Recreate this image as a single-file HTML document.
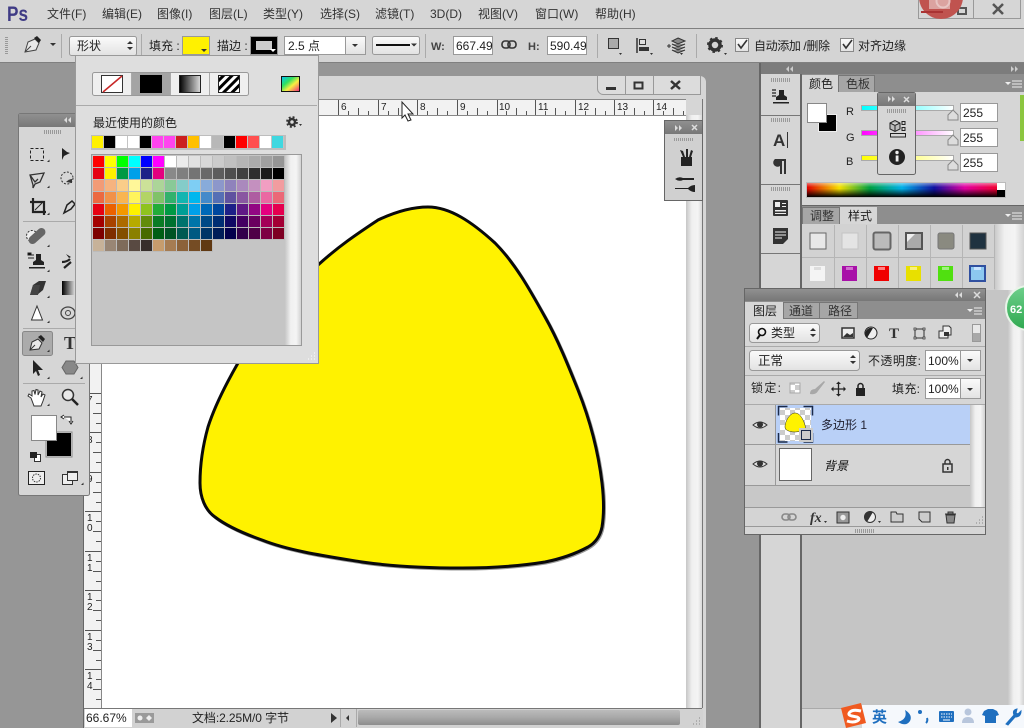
<!DOCTYPE html>
<html lang="zh"><head><meta charset="utf-8"><title>Photoshop</title>
<style>
html,body{margin:0;padding:0;width:1024px;height:728px;overflow:hidden;background:#969696}
svg{display:block;position:absolute;left:0;top:0}
text{font-family:"Liberation Sans","Noto Sans CJK SC",sans-serif;font-size:12px;fill:#222}
.m{fill:#333}
.tick{stroke:#555;stroke-width:1;fill:none}
.ln{stroke:#999;stroke-width:1;fill:none;shape-rendering:crispEdges}
#sw{position:absolute;left:93px;top:156px;width:192px;display:grid;grid-template-columns:repeat(16,12px);grid-auto-rows:12px}
#sw i{display:block;box-sizing:border-box;border:1px solid #bbb;border-width:0 1px 1px 0}
#rc{position:absolute;left:92px;top:136px;display:grid;grid-template-columns:repeat(16,12px);grid-auto-rows:12px}
#rc i{display:block;box-sizing:border-box;border-right:1px solid #c4c4c4}
</style></head><body>
<svg width="1024" height="728" viewBox="0 0 1024 728" xmlns="http://www.w3.org/2000/svg">
<defs>
<linearGradient id="btn" x1="0" y1="0" x2="0" y2="1"><stop offset="0" stop-color="#fbfbfb"/><stop offset="1" stop-color="#e2e2e2"/></linearGradient>
<linearGradient id="hd" x1="0" y1="0" x2="0" y2="1"><stop offset="0" stop-color="#909090"/><stop offset="1" stop-color="#777"/></linearGradient>
<linearGradient id="sc" x1="0" y1="0" x2="1" y2="0"><stop offset="0" stop-color="#c6c6c6"/><stop offset=".35" stop-color="#f0f0f0"/><stop offset=".7" stop-color="#f4f4f4"/><stop offset="1" stop-color="#d2d2d2"/></linearGradient>
<linearGradient id="th" x1="0" y1="0" x2="0" y2="1"><stop offset="0" stop-color="#bbb"/><stop offset=".5" stop-color="#a8a8a8"/><stop offset="1" stop-color="#8d8d8d"/></linearGradient>
<linearGradient id="gk" x1="0" y1="0" x2="1" y2="0"><stop offset="0" stop-color="#000"/><stop offset="1" stop-color="#ddd"/></linearGradient>
<linearGradient id="sr" x1="0" y1="0" x2="1" y2="0"><stop offset="0" stop-color="#00ffff"/><stop offset="1" stop-color="#ffffff"/></linearGradient>
<linearGradient id="sg" x1="0" y1="0" x2="1" y2="0"><stop offset="0" stop-color="#ff00ff"/><stop offset="1" stop-color="#ffffff"/></linearGradient>
<linearGradient id="sb" x1="0" y1="0" x2="1" y2="0"><stop offset="0" stop-color="#ffff00"/><stop offset="1" stop-color="#ffffff"/></linearGradient>
<linearGradient id="spec" x1="0" y1="0" x2="1" y2="0"><stop offset="0" stop-color="#e00000"/><stop offset=".17" stop-color="#f6e000"/><stop offset=".33" stop-color="#00a040"/><stop offset=".5" stop-color="#00b0e8"/><stop offset=".67" stop-color="#1010a0"/><stop offset=".83" stop-color="#e000a0"/><stop offset="1" stop-color="#f00030"/></linearGradient>
<linearGradient id="dk" x1="0" y1="0" x2="0" y2="1"><stop offset="0" stop-color="#fff" stop-opacity=".45"/><stop offset=".3" stop-color="#fff" stop-opacity="0"/><stop offset=".4" stop-color="#000" stop-opacity="0"/><stop offset="1" stop-color="#000"/></linearGradient>
<linearGradient id="grn" x1="0" y1="0" x2="0" y2="1"><stop offset="0" stop-color="#6fd08c"/><stop offset="1" stop-color="#2ea84f"/></linearGradient>
<linearGradient id="rain" x1="0" y1="0" x2="1" y2="1"><stop offset="0" stop-color="#00c0ff"/><stop offset=".35" stop-color="#30e060"/><stop offset=".6" stop-color="#f8f040"/><stop offset="1" stop-color="#f02080"/></linearGradient>
<pattern id="ck" width="10" height="10" patternUnits="userSpaceOnUse"><rect width="10" height="10" fill="#fff"/><rect width="5" height="5" fill="#ccc"/><rect x="5" y="5" width="5" height="5" fill="#ccc"/></pattern>
<pattern id="hat" width="6" height="6" patternUnits="userSpaceOnUse" patternTransform="rotate(-45)"><rect width="6" height="6" fill="#fff"/><rect width="6" height="3" fill="#000"/></pattern>
</defs>

<!-- menu bar -->
<rect width="1024" height="28" fill="#d6d6d6"/>
<text x="7" y="21" textLength="21" lengthAdjust="spacingAndGlyphs" style="font-size:21px;font-weight:bold;fill:#3f3b85">Ps</text>
<text class="m" x="47" y="18">文件(F)</text><text class="m" x="102" y="18">编辑(E)</text><text class="m" x="157" y="18">图像(I)</text><text class="m" x="209" y="18">图层(L)</text><text class="m" x="263" y="18">类型(Y)</text><text class="m" x="320" y="18">选择(S)</text><text class="m" x="375" y="18">滤镜(T)</text><text class="m" x="430" y="18">3D(D)</text><text class="m" x="478" y="18">视图(V)</text><text class="m" x="535" y="18">窗口(W)</text><text class="m" x="595" y="18">帮助(H)</text>
<path d="M918.500 0V18.500H1020.500V0M973.500 0V18" fill="none" stroke="#999"/>
<rect x="958" y="8" width="8" height="6" fill="none" stroke="#555" stroke-width="2"/>
<path d="M993 4l10 10M1003 4l-10 10" stroke="#555" stroke-width="2.500"/>
<circle cx="941" cy="-3" r="22" fill="#c0534f"/>
<path d="M929 0V9H950V0" fill="#dba3a0"/><circle cx="943" cy="1" r="6.500" fill="none" stroke="#e8c5c3" stroke-width="2"/>
<rect x="921" y="11" width="22" height="2" fill="#a33"/>

<!-- options bar -->
<rect y="28" width="1024" height="35" fill="#d4d4d4"/>
<path d="M0 28.500H1024M0 62.500H1024" stroke="#808080"/>
<path class="ln" d="M5 37.500h3M5 39.500h3M5 41.500h3M5 43.500h3M5 45.500h3M5 47.500h3M5 49.500h3M5 51.500h3M5 53.500h3"/>
<path d="M25 52l3-10 7-3 4 4-3 7z" fill="#e8e8e8" stroke="#444"/><path d="M34 38l3-2 4 4-2 3z" fill="#222"/><path d="M25 52l6-6" stroke="#444"/>
<path d="M50 43h6l-3 3z" fill="#333"/>
<path d="M61.500 34V58M141.500 34V58M425.500 34V58M597.500 34V58M696.500 34V58" stroke="#aaa"/>
<rect x="69.500" y="36.500" width="67" height="19" rx="2" fill="url(#btn)" stroke="#999"/>
<text x="77" y="50">形状</text><path d="M127 44l3-3 3 3zM127 47l3 3 3-3z" fill="#333"/>
<text x="149" y="50">填充 :</text>
<rect x="182.500" y="36.500" width="27" height="18" fill="#fff100" stroke="#999"/><path d="M201 49h6l-3 3z" fill="#333"/>
<text x="217" y="50">描边 :</text>
<rect x="250.500" y="36.500" width="27" height="18" fill="#000" stroke="#999"/><rect x="256" y="41" width="16" height="9" fill="#ccc"/><path d="M270 49h6l-3 3z" fill="#fff"/>
<rect x="284.500" y="36.500" width="61" height="18" fill="#fff" stroke="#999"/><text x="288" y="50">2.5 点</text>
<rect x="345.500" y="36.500" width="20" height="18" fill="url(#btn)" stroke="#999"/><path d="M352 44h6l-3 3z" fill="#333"/>
<rect x="372.500" y="36.500" width="47" height="18" rx="2" fill="url(#btn)" stroke="#999"/><path d="M376 45h34" stroke="#111" stroke-width="2"/><path d="M411 43.500h6l-3 3z" fill="#333"/>
<text x="431" y="50" style="fill:#444;font-weight:bold;font-size:11px">W:</text>
<rect x="453.500" y="36.500" width="39" height="18" fill="#fff" stroke="#999"/><text x="456" y="50">667.49</text>
<rect x="502" y="41" width="8" height="7" rx="3" fill="none" stroke="#333" stroke-width="1.600"/><rect x="508" y="41" width="8" height="7" rx="3" fill="none" stroke="#333" stroke-width="1.600"/>
<text x="528" y="50" style="fill:#444;font-weight:bold;font-size:11px">H:</text>
<rect x="547.500" y="36.500" width="39" height="18" fill="#fff" stroke="#999"/><text x="550" y="50">590.49</text>
<rect x="608.500" y="38.500" width="10" height="10" fill="#aaa" stroke="#333"/><path d="M619 53h3l-1.500 2z" fill="#333"/>
<path d="M637 38V53" stroke="#333" stroke-width="1.500"/><rect x="639.500" y="39.500" width="6" height="5" fill="#ddd" stroke="#333"/><rect x="639" y="47" width="10" height="4" fill="#333"/><path d="M650 53h3l-1.500 2z" fill="#333"/>
<path d="M667 46h4M669 44v4" stroke="#333"/><path d="M678 38l7 3-7 3-6-3zM672 44l6 3 7-3M672 47l6 3 7-3M672 50l6 3 7-3" fill="#888" stroke="#333"/><path d="M680 53h3l-1.500 2z" fill="#333"/>
<circle cx="715" cy="45" r="5" fill="none" stroke="#333" stroke-width="3.500"/><circle cx="715" cy="45" r="7" fill="none" stroke="#333" stroke-width="2" stroke-dasharray="2.500 3"/><path d="M724 53h3l-1.500 2z" fill="#333"/>
<rect x="735.500" y="38.500" width="13" height="13" fill="url(#btn)" stroke="#888"/><path d="M738 44l3 4 6-8" fill="none" stroke="#333" stroke-width="1.600"/>
<text x="754" y="50" textLength="76">自动添加 /删除</text>
<rect x="840.500" y="38.500" width="13" height="13" fill="url(#btn)" stroke="#888"/><path d="M843 44l3 4 6-8" fill="none" stroke="#333" stroke-width="1.600"/>
<text x="858" y="50">对齐边缘</text>

<!-- document window -->
<path d="M84 728V76H700a6 6 0 0 1 6 6V728Z" fill="#d6d6d6"/>
<path d="M597.500 76V88a6 6 0 0 0 6 6.500H700.500V76M625.500 76V94M653.500 76V94" fill="#dcdcdc" stroke="#999"/>
<rect x="606" y="87" width="10" height="3" fill="#333"/>
<rect x="634.500" y="82.500" width="8" height="6" fill="none" stroke="#333" stroke-width="2"/>
<path d="M671 81l9 8M680 81l-9 8" stroke="#333" stroke-width="2.500"/>
<rect x="84" y="99" width="602" height="609" fill="#fff"/>
<rect x="84" y="99" width="602" height="16" fill="#f2f2f2"/>
<rect x="84" y="99" width="18" height="609" fill="#f2f2f2"/>
<path d="M84 99.500H686M102 115.500H686M101.500 115V708" stroke="#888"/>
<path class="tick" d="M338.500 100V115M378.500 100V115M417.500 100V115M457.500 100V115M497.500 100V115M535.500 100V115M575.500 100V115M614.500 100V115M653.500 100V115M348.500 111V115M358.500 108V115M368.500 111V115M388.500 111V115M398.500 108V115M408.500 111V115M427.500 111V115M437.500 108V115M447.500 111V115M467.500 111V115M477.500 108V115M487.500 111V115M506.500 111V115M516.500 108V115M526.500 111V115M545.500 111V115M555.500 108V115M565.500 111V115M585.500 111V115M595.500 108V115M605.500 111V115M624.500 111V115M634.500 108V115M644.500 111V115M663.500 111V115M673.500 108V115M683.500 111V115"/>
<g style="font-size:10px"><text x="341" y="110" style="font-size:10px">6</text><text x="381" y="110" style="font-size:10px">7</text><text x="420" y="110" style="font-size:10px">8</text><text x="460" y="110" style="font-size:10px">9</text><text x="499" y="110" style="font-size:10px">10</text><text x="538" y="110" style="font-size:10px">11</text><text x="578" y="110" style="font-size:10px">12</text><text x="617" y="110" style="font-size:10px">13</text><text x="656" y="110" style="font-size:10px">14</text></g>
<path class="tick" d="M85 393.500H101M85 432.500H101M85 472.500H101M85 511.500H101M85 551.500H101M85 590.500H101M85 630.500H101M85 669.500H101M96 403.500H101M93 413.500H101M96 423.500H101M96 442.500H101M93 452.500H101M96 462.500H101M96 482.500H101M93 492.500H101M96 502.500H101M96 521.500H101M93 531.500H101M96 541.500H101M96 561.500H101M93 571.500H101M96 581.500H101M96 600.500H101M93 610.500H101M96 620.500H101M96 640.500H101M93 650.500H101M96 660.500H101M96 679.500H101M93 689.500H101M96 699.500H101"/>
<text x="87" y="403" style="font-size:10px">7</text><text x="87" y="443" style="font-size:10px">8</text><text x="87" y="482" style="font-size:10px">9</text>
<text x="87" y="521" style="font-size:10px">1</text><text x="87" y="531" style="font-size:10px">0</text>
<text x="87" y="561" style="font-size:10px">1</text><text x="87" y="571" style="font-size:10px">1</text>
<text x="87" y="600" style="font-size:10px">1</text><text x="87" y="610" style="font-size:10px">2</text>
<text x="87" y="640" style="font-size:10px">1</text><text x="87" y="650" style="font-size:10px">3</text>
<text x="87" y="679" style="font-size:10px">1</text><text x="87" y="689" style="font-size:10px">4</text>
<!-- shape -->
<path d="M429 208C451 208 473 223 496 244C516 264 531 291 546 318C559 341 569 366 579 391C591 421 599 451 603 484C605 501 605 516 603 528C601 538 596 544 589 548C576 555 561 560 546 563C521 567 491 569 463 569C426 569 391 567 363 563C326 557 291 552 263 541C246 535 229 528 216 518C206 511 201 498 201 484" fill="none" stroke="#999" stroke-width="3"/>
<path d="M428 207C450 207 472 222 495 243C515 263 530 290 545 317C558 340 568 365 578 390C590 420 598 450 602 483C604 500 604 515 602 527C600 537 595 543 588 547C575 554 560 559 545 562C520 566 490 568 462 568C425 568 390 566 362 562C325 556 290 551 262 540C245 534 228 527 215 517C205 510 200 497 200 483C200 465 203 445 208 427C215 405 226 384 238 363C260 325 290 290 318 265C340 245 360 232 378 220C395 212 412 207 428 207Z" fill="#fff200" stroke="#0a0a0a" stroke-width="3"/>
<!-- scrollbars & status -->
<rect x="686" y="115" width="17" height="593" fill="url(#sc)"/>
<path d="M702.500 99V728" stroke="#777"/>
<rect x="84" y="708" width="619" height="20" fill="#d2d2d2"/>
<path d="M84 708.500H702" stroke="#777"/><path d="M83.500 76V728" stroke="#666"/>
<rect x="85" y="709" width="47" height="18" fill="#fff"/><text x="86" y="722">66.67%</text>
<rect x="135" y="713" width="19" height="10" fill="#9a9a9a"/><circle cx="140" cy="718" r="2.500" fill="#eee"/><path d="M146 718l3-3 3 3-3 3z" fill="#eee"/>
<text x="192" y="722" textLength="97">文档:2.25M/0 字节</text>
<path d="M331 713l6 5-6 5z" fill="#333"/><path d="M340.500 709V727M356.500 709V727" stroke="#aaa"/>
<path d="M349 715v6l-3-3z" fill="#333"/>
<rect x="358" y="710" width="322" height="15" rx="2" fill="url(#th)"/>
<path d="M699 724h1M696 724h1M693 724h1M699 721h1M696 721h1M699 718h1" stroke="#888"/>

<!-- mini float brushes -->
<rect x="664.500" y="120.500" width="38" height="80" fill="#d0d0d0" stroke="#666"/>
<rect x="665" y="121" width="37" height="13" fill="url(#hd)"/>
<path d="M675 125l3 3-3 3zM679 125l3 3-3 3z" fill="#ddd"/><path d="M692 125l5 5M697 125l-5 5" stroke="#ddd" stroke-width="1.500"/>
<path class="ln" d="M674.500 138v3M676.500 138v3M678.500 138v3M680.500 138v3M682.500 138v3M684.500 138v3M686.500 138v3M688.500 138v3M690.500 138v3M692.500 138v3"/>
<path d="M681 157h11v9h-11z" fill="#222"/><path d="M683 157l-3-7 3 1 2 6zM686 157v-8h2v8zM689 157l2-7 2 1-2 6z" fill="#222"/>
<path d="M675 179q4-3 8-1h11v2h-11q-4 2-8-1zM675 188h13q3-3 7-3v7q-4 0-7-3h-13z" fill="#222"/>

<!-- right dock -->
<rect x="706" y="63" width="54" height="665" fill="#969696"/>
<rect x="760" y="63" width="264" height="665" fill="#c5c5c5"/>
<rect x="761" y="63" width="263" height="11" fill="#7c7c7c"/>
<path d="M793 66l-3 3 3 3zM789 66l-3 3 3 3zM1011 66l3 3-3 3zM1015 66l3 3-3 3z" fill="#ccc"/>
<rect x="761" y="74" width="39" height="654" fill="#d6d6d6"/>
<path d="M759.500 63V728M760.500 63V728M800.500 74V728M801.500 74V728" stroke="#666"/>
<path d="M761 115.500H800M761 184.500H800M761 253.500H800" stroke="#777"/>
<path class="ln" d="M771.500 78v4M773.500 78v4M775.500 78v4M777.500 78v4M779.500 78v4M781.500 78v4M783.500 78v4M785.500 78v4M787.500 78v4M789.500 78v4M771.500 118v4M773.500 118v4M775.500 118v4M777.500 118v4M779.500 118v4M781.500 118v4M783.500 118v4M785.500 118v4M787.500 118v4M789.500 118v4M771.500 187v4M773.500 187v4M775.500 187v4M777.500 187v4M779.500 187v4M781.500 187v4M783.500 187v4M785.500 187v4M787.500 187v4M789.500 187v4"/>
<!-- dock icons -->
<path d="M772 90h4M772 93h4M772 96h4" stroke="#222" stroke-width="1.300"/><path d="M779 90h5v5l3 2v3h-11v-3l3-2z" fill="#222"/><rect x="773" y="102" width="16" height="1.500" fill="#222"/>
<text x="773" y="146" style="font-size:17px;font-weight:bold;fill:#333">A</text><path d="M787.500 132V148" stroke="#333"/>
<path d="M775 159h11v15h-2v-13h-2v13h-2v-8a4 4 0 0 1-5-7z" fill="#333"/>
<rect x="773" y="200" width="15" height="16" rx="1" fill="#333"/><path d="M775 202h5v5h-5zM775 210h11v1.500h-11zM775 213h11v1h-11zM782 203h4v1h-4zM782 206h4v1h-4z" fill="#eee"/>
<path d="M773 228h15v11l-5 5h-10z" fill="#333"/><path d="M775 232h11M775 235h11M775 238h7" stroke="#eee"/>

<!-- color panel -->
<rect x="802" y="74" width="222" height="18" fill="#8e8e8e"/>
<rect x="802" y="75" width="36" height="18" fill="#d6d6d6"/>
<rect x="838.500" y="75.500" width="36" height="17" fill="#a6a6a6" stroke="#777"/>
<text x="809" y="88">颜色</text><text x="846" y="88" style="fill:#333">色板</text>
<path d="M1005 82h6l-3 3z" fill="#eee"/><path d="M1012 81h10M1012 84h10M1012 87h10" stroke="#eee"/>
<rect x="802" y="92" width="222" height="113" fill="#d6d6d6"/>
<rect x="1020" y="95" width="4" height="46" fill="#8cc63f"/>
<rect x="818.500" y="114.500" width="18" height="17" fill="#000" stroke="#eee"/>
<rect x="807.500" y="103.500" width="19" height="19" fill="#fff" stroke="#888"/>
<text x="846" y="115" style="font-size:11px">R</text><text x="846" y="141" style="font-size:11px">G</text><text x="846" y="165" style="font-size:11px">B</text>
<rect x="861.500" y="105.500" width="92" height="5" fill="url(#sr)" stroke="#aaa"/>
<rect x="861.500" y="130.500" width="92" height="5" fill="url(#sg)" stroke="#aaa"/>
<rect x="861.500" y="155.500" width="92" height="5" fill="url(#sb)" stroke="#aaa"/>
<path d="M953 110l5 5v5h-10v-5zM953 135l5 5v5h-10v-5zM953 160l5 5v5h-10v-5z" fill="#ddd" stroke="#888"/>
<rect x="960.500" y="103.500" width="37" height="18" fill="#fff" stroke="#999"/><text x="963" y="117">255</text>
<rect x="960.500" y="128.500" width="37" height="18" fill="#fff" stroke="#999"/><text x="963" y="142">255</text>
<rect x="960.500" y="153.500" width="37" height="18" fill="#fff" stroke="#999"/><text x="963" y="167">255</text>
<rect x="806.500" y="182.500" width="199" height="15" fill="#eee" stroke="#bbb"/>
<rect x="807" y="183" width="190" height="14" fill="url(#spec)"/><rect x="807" y="183" width="190" height="14" fill="url(#dk)"/>
<rect x="997" y="183" width="8" height="7" fill="#fff"/><rect x="997" y="190" width="8" height="7" fill="#000"/>
<!-- float info -->
<rect x="877.500" y="92.500" width="38" height="82" rx="2" fill="#d6d6d6" stroke="#666"/>
<rect x="878" y="93" width="37" height="13" fill="url(#hd)"/>
<path d="M888 96l3 3-3 3zM892 96l3 3-3 3z" fill="#ddd"/><path d="M904 97l5 5M909 97l-5 5" stroke="#ddd" stroke-width="1.500"/>
<path class="ln" d="M887.500 109v4M889.500 109v4M891.500 109v4M893.500 109v4M895.500 109v4M897.500 109v4M899.500 109v4M901.500 109v4M903.500 109v4M905.500 109v4"/>
<path d="M890 123l5-2.500 5 2.500v6l-5 2.500-5-2.500zM890 123l5 2.500 5-2.500M895 125.500v6" fill="#bbb" stroke="#222"/>
<path d="M902 121.500h3v3h-3zM902 127.500h3v3h-3z" fill="none" stroke="#222"/><rect x="890.500" y="133.500" width="15" height="3.500" fill="none" stroke="#222"/>
<circle cx="897" cy="157" r="8" fill="#222"/><rect x="895.700" y="155.500" width="2.800" height="6" fill="#eee"/><circle cx="897" cy="152.500" r="1.700" fill="#eee"/>

<!-- styles panel -->
<rect x="802" y="205" width="222" height="19" fill="#8e8e8e"/>
<path d="M802 205.500H1024" stroke="#666"/>
<rect x="802.500" y="207.500" width="37" height="17" fill="#a6a6a6" stroke="#777"/>
<rect x="840" y="207" width="37" height="18" fill="#d6d6d6"/>
<text x="810" y="220" style="fill:#333">调整</text><text x="848" y="220">样式</text>
<path d="M1005 214h6l-3 3z" fill="#eee"/><path d="M1012 213h10M1012 216h10M1012 219h10" stroke="#eee"/>
<rect x="802" y="224" width="192" height="66" fill="#d2d2d2"/>
<rect x="994" y="224" width="30" height="66" fill="url(#sc)"/>
<path d="M834.500 225V289M866.500 225V289M898.500 225V289M930.500 225V289M962.500 225V289M994.500 225V289M802 257.500H994" stroke="#b5b5b5"/>
<rect x="810" y="233" width="16" height="16" fill="#e8e8e8" stroke="#666"/>
<rect x="842" y="233" width="16" height="16" fill="#e4e4e4" stroke="#c4c4c4"/>
<rect x="873.500" y="232.500" width="17" height="17" rx="2" fill="#bbb" stroke="#666" stroke-width="2"/>
<rect x="906" y="233" width="16" height="16" fill="#aaa" stroke="#555" stroke-width="2"/><path d="M907 234h8l-8 8z" fill="#eee"/>
<rect x="938" y="233" width="16" height="16" rx="2" fill="#8a8a80" stroke="#777"/>
<rect x="970" y="233" width="16" height="16" fill="#1f3240" stroke="#555"/>
<rect x="810" y="266" width="15" height="15" fill="#f4f4f4"/><rect x="842" y="266" width="15" height="15" fill="#a810a8"/><rect x="874" y="266" width="15" height="15" fill="#f00000"/><rect x="906" y="266" width="15" height="15" fill="#e8e000"/><rect x="938" y="266" width="15" height="15" fill="#50e010"/><rect x="970" y="266" width="15" height="15" fill="#8cc8f0" stroke="#3050a0" stroke-width="2"/>
<rect x="814" y="267" width="7" height="3" fill="#ddd"/><rect x="846" y="267" width="7" height="3" fill="#d070d0"/><rect x="878" y="267" width="7" height="3" fill="#ff8080"/><rect x="910" y="267" width="7" height="3" fill="#f8f080"/><rect x="942" y="267" width="7" height="3" fill="#a0f080"/><rect x="974" y="267" width="7" height="3" fill="#c8e4ff"/>
<!-- lower dock bg -->
<rect x="802" y="290" width="222" height="418" fill="#c5c5c5"/>
<rect x="1008" y="290" width="16" height="418" fill="url(#sc)"/>
<rect x="802" y="708" width="222" height="20" fill="#d6d6d6"/>
<path d="M802 708.500H1024" stroke="#aaa"/>
<!-- green badge -->
<circle cx="1028" cy="308" r="22" fill="url(#grn)" stroke="#e8f4e8" stroke-width="2"/>
<text x="1010" y="313" style="fill:#fff;font-weight:bold;font-size:11px">62</text>

<!-- layers panel -->
<rect x="744.500" y="288.500" width="241" height="246" fill="#d6d6d6" stroke="#666"/>
<rect x="745" y="289" width="240" height="12" fill="url(#hd)"/>
<path d="M962 292l-3 3 3 3zM958 292l-3 3 3 3z" fill="#ddd"/><path d="M974 292l6 6M980 292l-6 6" stroke="#ddd" stroke-width="1.500"/>
<rect x="745" y="301" width="240" height="18" fill="#8e8e8e"/>
<rect x="745" y="302" width="38" height="17" fill="#d6d6d6"/>
<rect x="783.500" y="302.500" width="36" height="16" fill="#a6a6a6" stroke="#777"/><rect x="819.500" y="302.500" width="38" height="16" fill="#a6a6a6" stroke="#777"/>
<text x="753" y="315">图层</text><text x="789" y="315" style="fill:#333">通道</text><text x="828" y="315" style="fill:#333">路径</text>
<path d="M967 309h6l-3 3z" fill="#eee"/><path d="M974 308h8M974 311h8M974 314h8" stroke="#eee"/>
<rect x="749.500" y="323.500" width="70" height="19" rx="3" fill="url(#btn)" stroke="#999"/>
<circle cx="762" cy="332" r="3.500" fill="none" stroke="#111" stroke-width="1.600"/><path d="M760 335l-3 4" stroke="#111" stroke-width="2"/>
<text x="771" y="337">类型</text><path d="M810 331l3-3 3 3zM810 334l3 3 3-3z" fill="#333"/>
<rect x="842" y="328" width="12" height="10" fill="#eee" stroke="#333" stroke-width="1.500"/><path d="M843 337l4-4 3 2 3-2v4z" fill="#333"/>
<path d="M871 327a6 6 0 1 1-.1 0z" fill="#eee" stroke="#222"/><path d="M875 328l-6 10a6 6 0 0 0 6-10z" fill="#222" transform="rotate(180 871 333)"/>
<text x="889" y="338" style="font-family:'Liberation Serif',serif;font-size:15px;font-weight:bold;fill:#333">T</text>
<rect x="915" y="329" width="9" height="9" fill="none" stroke="#333"/><path d="M914 328h2v2h-2zM923 328h2v2h-2zM914 337h2v2h-2zM923 337h2v2h-2z" fill="#fff" stroke="#333" stroke-width=".8"/>
<path d="M943 326h6l2 2v7h-3v3h-9v-7h4z" fill="#eee" stroke="#333"/><rect x="944" y="332" width="5" height="4" fill="#333"/>
<rect x="972.500" y="324.500" width="8" height="17" fill="#e8e8e8" stroke="#999"/><rect x="973" y="333" width="7" height="8" fill="#a8a8a8"/>
<path d="M745 346.500H985M745 375.500H985M745 404.500H985" stroke="#aaa"/>
<rect x="749.500" y="350.500" width="110" height="20" rx="3" fill="url(#btn)" stroke="#999"/>
<text x="758" y="365" style="font-size:12.500px">正常</text><path d="M850 358l3-3 3 3zM850 361l3 3 3-3z" fill="#333"/>
<text x="868" y="365" textLength="53">不透明度:</text>
<rect x="925.500" y="350.500" width="35" height="20" fill="#fff" stroke="#999"/><text x="928" y="365">100%</text>
<rect x="960.500" y="350.500" width="20" height="20" fill="url(#btn)" stroke="#999"/><path d="M967 359h6l-3 3z" fill="#333"/>
<text x="751" y="392" textLength="30">锁定:</text>
<rect x="790" y="383" width="10" height="10" fill="url(#ck)" stroke="#aaa"/>
<path d="M810 394q0-5 5-5l9-8 1 1-7 9q-2 4-8 3z" fill="#a8a8a8"/>
<path d="M838.500 383v12M832.500 389h12" stroke="#222" stroke-width="1.300"/><path d="M838.500 381.500l-2.500 2.500h5zM838.500 396.500l-2.500-2.500h5zM831 389l2.500-2.500v5zM846 389l-2.500-2.500v5z" fill="#222"/>
<rect x="856" y="388" width="9" height="8" fill="#222"/><path d="M858 388v-2a2.500 2.500 0 0 1 5 0v2" fill="none" stroke="#222" stroke-width="1.500"/>
<text x="892" y="393" textLength="28">填充:</text>
<rect x="925.500" y="378.500" width="35" height="20" fill="#fff" stroke="#999"/><text x="928" y="393">100%</text>
<rect x="960.500" y="378.500" width="20" height="20" fill="url(#btn)" stroke="#999"/><path d="M967 388h6l-3 3z" fill="#333"/>
<!-- layers -->
<rect x="776" y="405" width="194" height="40" fill="#b9d0f7"/>
<rect x="970" y="405" width="15" height="102" fill="url(#sc)"/>
<rect x="745" y="486" width="225" height="21" fill="#c8c8c8"/>
<path d="M745 444.500H970M745 485.500H970M775.500 405V486" stroke="#999"/>
<path d="M753 425q7-6 14 0q-7 6-14 0z" fill="#ddd" stroke="#333"/><circle cx="760" cy="424.500" r="3" fill="#333"/>
<path d="M753 464q7-6 14 0q-7 6-14 0z" fill="#ddd" stroke="#333"/><circle cx="760" cy="463.500" r="3" fill="#333"/>
<rect x="780" y="408" width="31" height="33" fill="url(#ck)"/>
<path d="M785 427c0-6 5-14 10-14s8 6 10 12l1 6-11 1c-6 0-10-2-10-5z" fill="#fff200" stroke="#222" stroke-width=".5"/>
<path d="M787.500 406.500h-9v9M803.500 406.500h9v9M778.500 433v9h9M812.500 433v9h-9" fill="none" stroke="#1a2a4a" stroke-width="1.500"/>
<rect x="799" y="428" width="14" height="14" fill="#ccc"/><rect x="801.500" y="430.500" width="9" height="9" fill="none" stroke="#1a2a4a"/>
<rect x="779.500" y="448.500" width="32" height="32" fill="#fff" stroke="#666"/>
<text x="821" y="429" style="fill:#223">多边形 1</text>
<text x="824" y="470" style="font-style:italic;fill:#111">背景</text>
<rect x="943" y="464" width="9" height="8" fill="none" stroke="#333" stroke-width="1.500"/><path d="M945 464v-2a2.500 2.500 0 0 1 5 0v2" fill="none" stroke="#333" stroke-width="1.400"/><rect x="947" y="467" width="1.500" height="3" fill="#333"/>
<!-- layer footer -->
<path d="M745 507.500H985M745 526.500H985" stroke="#999"/>
<rect x="745" y="508" width="240" height="18" fill="#d4d4d4"/>
<rect x="782" y="514" width="8" height="6" rx="3" fill="none" stroke="#888" stroke-width="1.600"/><rect x="788" y="514" width="8" height="6" rx="3" fill="none" stroke="#888" stroke-width="1.600"/>
<text x="810" y="522" style="font-family:'Liberation Serif',serif;font-style:italic;font-weight:bold;font-size:14px;fill:#333">fx</text><path d="M824 521h3l-1.500 2z" fill="#333"/>
<rect x="837" y="512" width="12" height="11" fill="#999" stroke="#333"/><circle cx="843" cy="517.500" r="2.700" fill="#eee"/>
<circle cx="870" cy="517" r="5.500" fill="#eee" stroke="#333"/><path d="M873 512l-6 10a5.500 5.500 0 0 1 6-10z" fill="#333"/><path d="M878 521h3l-1.500 2z" fill="#333"/>
<path d="M891 512h5l1 2h6v8h-12z" fill="#ccc" stroke="#333"/>
<path d="M919 512h11v10h-8l-3-3z" fill="#ccc" stroke="#333"/>
<path d="M945 514h11M948 514v-2h5v2M946 515h9l-1 8h-7z" fill="#888" stroke="#333"/>
<path d="M982 523h1M979 523h1M976 523h1M982 520h1M979 520h1M982 517h1" stroke="#888"/>
<path class="ln" d="M855.500 529v4M857.500 529v4M859.500 529v4M861.500 529v4M863.500 529v4M865.500 529v4M867.500 529v4M869.500 529v4M871.500 529v4M873.500 529v4"/>

<!-- toolbox -->
<rect x="18.500" y="113.500" width="71" height="382" rx="2" fill="#d6d6d6" stroke="#777"/>
<rect x="19" y="114" width="70" height="13" fill="url(#hd)"/>
<path d="M67 117l-3 3 3 3zM71 117l-3 3 3 3z" fill="#ddd"/>
<path class="ln" d="M44.500 130v4M46.500 130v4M48.500 130v4M50.500 130v4M52.500 130v4M54.500 130v4M56.500 130v4M58.500 130v4M60.500 130v4"/>
<rect x="30.500" y="148.500" width="13" height="12" fill="none" stroke="#222" stroke-dasharray="3 2"/>
<path d="M62 148l5 4 3 1-6 3-2 4z" fill="#222"/><path d="M47 162h2.500v-2.500z" fill="#333"/>
<path d="M30 175l14-2-4 9-5 2-2 4v-3zM30 175l5 7 3-3" fill="none" stroke="#333" stroke-width="1.300"/><path d="M47 188h2.500v-2.500z" fill="#333"/>
<path d="M33 198v14h13M30 202h14v13" fill="none" stroke="#222" stroke-width="2.200"/><path d="M35 210l7-7" stroke="#222"/><path d="M47 215h2.500v-2.500z" fill="#333"/>
<circle cx="67" cy="178" r="6" fill="none" stroke="#333" stroke-dasharray="2 1.500"/><path d="M66 182q3-3 6-3v4z" fill="#333"/>
<path d="M64 213l3-8 5-4 3 3-4 5z" fill="none" stroke="#222" stroke-width="1.500"/>
<path d="M23 221.500H85M23 328.500H85M23 383.500H85" stroke="#aaa"/>
<circle cx="32" cy="236" r="5.500" fill="#eee" stroke="#333" stroke-dasharray="2 1.500"/><rect x="27" y="232" width="20" height="8" rx="4" transform="rotate(-42 37 236)" fill="#666"/><path d="M47 247h2.500v-2.500z" fill="#333"/>
<path d="M28 255h6M28 258h6M28 253h3v2h-3z" stroke="#222"/><path d="M36 254h5v6l3 2v3h-11v-3l3-2z" fill="#222"/><path d="M29 267h16v1.500h-16z" fill="#222"/><path d="M47 272h2.500v-2.500z" fill="#333"/>
<path d="M62 262q5 0 8-3M64 268l7-6" stroke="#222" stroke-width="2.200" fill="none"/><path d="M66 254l5 3-2 1z" fill="#222"/>
<path d="M30 295l3-10 6-4h7l-3 9-6 5z" fill="#333"/><path d="M30 295l3-10h7l-2 10z" fill="#444"/><path d="M47 298h2.500v-2.500z" fill="#333"/>
<rect x="62" y="281" width="13" height="14" fill="url(#gk)"/>
<path d="M37 306l5.500 14h-11z" fill="#fff" stroke="#333"/><path d="M47 323h2.500v-2.500z" fill="#333"/>
<ellipse cx="68" cy="313" rx="7" ry="6" fill="none" stroke="#444" stroke-width="1.300"/><circle cx="68" cy="313" r="2.500" fill="none" stroke="#444"/>
<rect x="22.500" y="331.500" width="30" height="24" rx="2" fill="#ababab" stroke="#888"/>
<path d="M30 350l2-8 6-3 4 4-3 6z" fill="#e8e8e8" stroke="#333"/><path d="M38 337l3-2 4 4-2 3z" fill="#222"/><path d="M30 350l5-5" stroke="#333"/><path d="M47 352h2.500v-2.500z" fill="#333"/>
<text x="64" y="349" style="font-family:'Liberation Serif',serif;font-size:18px;font-weight:bold;fill:#333">T</text>
<path d="M33 360v14l3-3 2 5 2-1-2-5h5z" fill="#222"/><path d="M47 379h2.500v-2.500z" fill="#333"/>
<path d="M66 361h8l4 6.500-4 6.500h-8l-4-6.500z" fill="#888" stroke="#666"/><path d="M80 379h2.500v-2.500z" fill="#333"/>
<path d="M31 398l-3-2 1-2 3 2v-5l2-.5 1 4 1-5 2 .5v5l2-4 2 1-1 5 2-3 2 1-2 6-2 5h-7z" fill="#fff" stroke="#333"/><path d="M47 406h2.500v-2.500z" fill="#333"/>
<circle cx="68" cy="395" r="5.500" fill="#e8e8e8" stroke="#333" stroke-width="1.500"/><path d="M72 399l6 6" stroke="#222" stroke-width="2.500"/>
<path d="M64 417h7v5M64 415l-3 2 3 2M69 421l2 3 2-3" fill="#fff" stroke="#222"/>
<rect x="46.500" y="432.500" width="25" height="24" fill="#000" stroke="#ddd" stroke-width="1"/><rect x="46" y="432" width="26" height="25" fill="none" stroke="#888"/>
<rect x="31.500" y="415.500" width="25" height="25" fill="#fff" stroke="#888"/>
<rect x="34.500" y="454.500" width="6" height="7" fill="#fff" stroke="#333"/><rect x="30" y="452" width="7" height="6" fill="#222"/>
<rect x="28.500" y="471.500" width="16" height="13" fill="#eee" stroke="#222"/><circle cx="36.500" cy="478" r="4" fill="none" stroke="#333" stroke-dasharray="1.500 1"/>
<rect x="62.500" y="474.500" width="10" height="10" fill="#eee" stroke="#333"/><rect x="67.500" y="471.500" width="10" height="9" fill="#eee" stroke="#333"/><rect x="67" y="471" width="11" height="2" fill="#333"/><path d="M81 485h2.500v-2.500z" fill="#333"/>

<!-- IME bar -->
<rect x="862" y="705" width="162" height="23" fill="#f5f8fc"/>
<path d="M841 708l20-5 5 20-20 5z" fill="#f05a20"/>
<path d="M861 711q-8-2-11 1t2 4l5 1q4 2 0 4t-10 0" fill="none" stroke="#fff" stroke-width="3"/>
<text x="872" y="722" style="font-weight:bold;font-size:15px;fill:#1f6fbf">英</text>
<path d="M905 710q3 9-7 12q8 5 12-1q3-6-5-11z" fill="#1f6fbf"/>
<circle cx="920" cy="712" r="2" fill="#1f6fbf"/><path d="M927 718q1 3-1 5" stroke="#1f6fbf" stroke-width="2" fill="none"/>
<rect x="939" y="711" width="15" height="11" rx="1" fill="#1f6fbf"/><path d="M941 714h11M941 717h11" stroke="#fff" stroke-dasharray="1.500 1"/><path d="M943 720h7" stroke="#fff"/>
<circle cx="968" cy="712" r="3.500" fill="#b8c6dc"/><path d="M962 723q0-6 6-6t6 6z" fill="#b8c6dc"/>
<path d="M984 711l4-2h5l4 2 2 4-3 1v7h-11v-7l-3-1z" fill="#1f6fbf"/>
<path d="M1006 724l8-9q-2-5 3-6l-1 4 2 1 3-3q0 6-6 6l-7 8z" fill="#1f6fbf" stroke="#1f6fbf"/>

<!-- color popover -->
<rect x="75.500" y="55.500" width="243" height="308" fill="#dedede" stroke="#999"/>
<rect x="92.500" y="72.500" width="156" height="23" rx="2" fill="#efefef" stroke="#999"/>
<rect x="132" y="73" width="39" height="22" fill="#a4a4a4"/>
<path d="M131.500 73V95M170.500 73V95M209.500 73V95" stroke="#aaa"/>
<rect x="101.500" y="75.500" width="21" height="17" fill="#fff" stroke="#333"/><path d="M103 92l19-16" stroke="#c82828" stroke-width="1.600"/>
<rect x="140" y="75" width="22" height="18" fill="#000"/>
<rect x="179.500" y="75.500" width="21" height="17" fill="url(#gk)" stroke="#222"/>
<rect x="218.500" y="75.500" width="21" height="17" fill="url(#hat)" stroke="#222"/>
<rect x="281.500" y="76.500" width="18" height="15" fill="url(#rain)" stroke="#111" stroke-width="1"/>
<path d="M76 105.500H317" stroke="#aaa"/>
<text x="93" y="127">最近使用的颜色</text>
<circle cx="292" cy="122" r="3" fill="none" stroke="#333" stroke-width="2.500"/><circle cx="292" cy="122" r="5" fill="none" stroke="#333" stroke-width="1.800" stroke-dasharray="2 2"/><path d="M299 124h3l-1.500 2z" fill="#333"/>
<rect x="91" y="135" width="195" height="15" fill="#bdbdbd"/>
<rect x="91.500" y="154.500" width="210" height="191" fill="#c5c5c5" stroke="#999"/>
<rect x="285" y="155" width="16" height="190" fill="url(#sc)"/>
<path d="M314 359h1M311 359h1M308 359h1M314 356h1M311 356h1M314 353h1" stroke="#fff"/>

<!-- cursor -->
<path d="M402 102V118L405 115L408 121L411 120L408 114H413Z" fill="#fff" stroke="#222"/>
</svg>
<div id="rc"><i style="background:#fff100"></i><i style="background:#000"></i><i style="background:#fff"></i><i style="background:#fff"></i><i style="background:#000"></i><i style="background:#ff44ee"></i><i style="background:#ff44ee"></i><i style="background:#cc1f1f"></i><i style="background:#ffc000"></i><i style="background:#fff"></i><i style="background:#b8b8b8"></i><i style="background:#000"></i><i style="background:#ff0000"></i><i style="background:#ff5050"></i><i style="background:#fff"></i><i style="background:#40d8e0"></i></div>
<div id="sw">
<i style="background:#f00"></i><i style="background:#ff0"></i><i style="background:#0f0"></i><i style="background:#0ff"></i><i style="background:#00f"></i><i style="background:#f0f"></i><i style="background:#fff"></i><i style="background:#ebebeb"></i><i style="background:#e1e1e1"></i><i style="background:#d7d7d7"></i><i style="background:#cbcbcb"></i><i style="background:#c0c0c0"></i><i style="background:#b5b5b5"></i><i style="background:#ababab"></i><i style="background:#a0a0a0"></i><i style="background:#959595"></i>
<i style="background:#e60012"></i><i style="background:#fff100"></i><i style="background:#009944"></i><i style="background:#00a0e9"></i><i style="background:#1d2088"></i><i style="background:#e4007f"></i><i style="background:#898989"></i><i style="background:#7f7f7f"></i><i style="background:#747474"></i><i style="background:#696969"></i><i style="background:#5d5d5d"></i><i style="background:#4f4f4f"></i><i style="background:#404040"></i><i style="background:#2f2f2f"></i><i style="background:#1a1a1a"></i><i style="background:#000"></i>
<i style="background:#f29b76"></i><i style="background:#f6b37f"></i><i style="background:#facd89"></i><i style="background:#fff799"></i><i style="background:#cce198"></i><i style="background:#acd598"></i><i style="background:#89c997"></i><i style="background:#84ccc9"></i><i style="background:#7ecef4"></i><i style="background:#88abda"></i><i style="background:#8c97cb"></i><i style="background:#8f82bc"></i><i style="background:#aa89bd"></i><i style="background:#c490bf"></i><i style="background:#f19ec2"></i><i style="background:#f29c9f"></i>
<i style="background:#ec6941"></i><i style="background:#f19149"></i><i style="background:#f8b551"></i><i style="background:#fff45c"></i><i style="background:#b3d465"></i><i style="background:#80c269"></i><i style="background:#32b16c"></i><i style="background:#13b5b1"></i><i style="background:#00b7ee"></i><i style="background:#448aca"></i><i style="background:#556fb5"></i><i style="background:#5f52a0"></i><i style="background:#8957a1"></i><i style="background:#ae5da1"></i><i style="background:#ea68a2"></i><i style="background:#eb6877"></i>
<i style="background:#e60012"></i><i style="background:#eb6100"></i><i style="background:#f39800"></i><i style="background:#fff100"></i><i style="background:#8fc31f"></i><i style="background:#22ac38"></i><i style="background:#009944"></i><i style="background:#009e96"></i><i style="background:#00a0e9"></i><i style="background:#0068b7"></i><i style="background:#00479d"></i><i style="background:#1d2088"></i><i style="background:#601986"></i><i style="background:#920783"></i><i style="background:#e4007f"></i><i style="background:#e5004f"></i>
<i style="background:#a40000"></i><i style="background:#a84200"></i><i style="background:#ac6a00"></i><i style="background:#b7aa00"></i><i style="background:#638c0b"></i><i style="background:#097c25"></i><i style="background:#007130"></i><i style="background:#00736d"></i><i style="background:#0075a9"></i><i style="background:#004986"></i><i style="background:#002e73"></i><i style="background:#100964"></i><i style="background:#440062"></i><i style="background:#6a005f"></i><i style="background:#a40058"></i><i style="background:#a40035"></i>
<i style="background:#7d0000"></i><i style="background:#7f2d00"></i><i style="background:#834e00"></i><i style="background:#8a8000"></i><i style="background:#486a00"></i><i style="background:#005e15"></i><i style="background:#005325"></i><i style="background:#005952"></i><i style="background:#005982"></i><i style="background:#003567"></i><i style="background:#001d58"></i><i style="background:#03004c"></i><i style="background:#32004b"></i><i style="background:#4f0047"></i><i style="background:#7e0043"></i><i style="background:#7e0023"></i>
<i style="background:#c7b299"></i><i style="background:#998675"></i><i style="background:#7e6b5a"></i><i style="background:#594a42"></i><i style="background:#362e2b"></i><i style="background:#c69c6d"></i><i style="background:#a67c52"></i><i style="background:#8c6239"></i><i style="background:#754c24"></i><i style="background:#603913"></i>
</div>
</body></html>
